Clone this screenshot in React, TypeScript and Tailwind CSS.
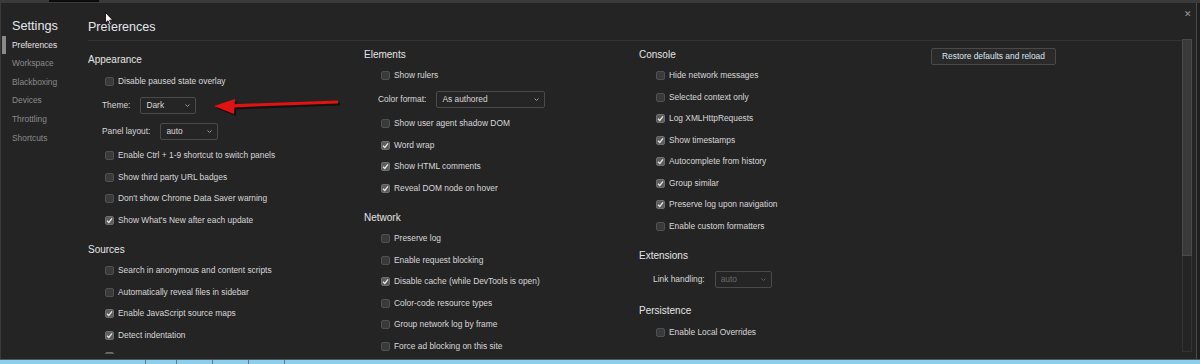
import React from "react"

type Item =
  | { kind: "head"; text: string; first?: boolean }
  | { kind: "check"; text: string; on?: boolean }
  | { kind: "select"; label: string; value: string; w: string; disabled?: boolean }

const col1: Item[] = [
  { kind: "head", text: "Appearance", first: true },
  { kind: "check", text: "Disable paused state overlay" },
  { kind: "select", label: "Theme:", value: "Dark", w: "w-[56px]" },
  { kind: "select", label: "Panel layout:", value: "auto", w: "w-[58px]" },
  { kind: "check", text: "Enable Ctrl + 1-9 shortcut to switch panels" },
  { kind: "check", text: "Show third party URL badges" },
  { kind: "check", text: "Don't show Chrome Data Saver warning" },
  { kind: "check", text: "Show What's New after each update", on: true },
  { kind: "head", text: "Sources" },
  { kind: "check", text: "Search in anonymous and content scripts" },
  { kind: "check", text: "Automatically reveal files in sidebar" },
  { kind: "check", text: "Enable JavaScript source maps", on: true },
  { kind: "check", text: "Detect indentation", on: true },
  // scrolled past the bottom edge, only the box top peeks out
  { kind: "check", text: "", on: true },
]

const col2: Item[] = [
  { kind: "head", text: "Elements", first: true },
  { kind: "check", text: "Show rulers" },
  { kind: "select", label: "Color format:", value: "As authored", w: "w-[109px]" },
  { kind: "check", text: "Show user agent shadow DOM" },
  { kind: "check", text: "Word wrap", on: true },
  { kind: "check", text: "Show HTML comments", on: true },
  { kind: "check", text: "Reveal DOM node on hover", on: true },
  { kind: "head", text: "Network" },
  { kind: "check", text: "Preserve log" },
  { kind: "check", text: "Enable request blocking" },
  { kind: "check", text: "Disable cache (while DevTools is open)", on: true },
  { kind: "check", text: "Color-code resource types" },
  { kind: "check", text: "Group network log by frame" },
  { kind: "check", text: "Force ad blocking on this site" },
]

const col3: Item[] = [
  { kind: "head", text: "Console", first: true },
  { kind: "check", text: "Hide network messages" },
  { kind: "check", text: "Selected context only" },
  { kind: "check", text: "Log XMLHttpRequests", on: true },
  { kind: "check", text: "Show timestamps", on: true },
  { kind: "check", text: "Autocomplete from history", on: true },
  { kind: "check", text: "Group similar", on: true },
  { kind: "check", text: "Preserve log upon navigation", on: true },
  { kind: "check", text: "Enable custom formatters" },
  { kind: "head", text: "Extensions" },
  { kind: "select", label: "Link handling:", value: "auto", w: "w-[57px]", disabled: true },
  { kind: "head", text: "Persistence" },
  { kind: "check", text: "Enable Local Overrides" },
]

const navItems = ["Preferences", "Workspace", "Blackboxing", "Devices", "Throttling", "Shortcuts"]

function Checkbox({ on }: { on?: boolean }) {
  return (
    <span
      className={`flex h-[9px] w-[9px] shrink-0 items-center justify-center rounded-[2px] border ${
        on ? "border-[#6e6e6e] bg-[#5c5c5c]" : "border-[#505050] bg-[#3a3a3a]"
      }`}
    >
      {on && (
        <svg width="7" height="7" viewBox="0 0 7 7">
          <path d="M1 3.8 L2.8 5.5 L6 1.3" fill="none" stroke="#e6e6e6" strokeWidth="1.3" />
        </svg>
      )}
    </span>
  )
}

function Row({ item }: { item: Item }) {
  if (item.kind === "head") {
    return (
      <div className={`flex h-[21.5px] shrink-0 items-center text-[10px] text-[#e4e4e4] ${item.first ? "" : "mt-[7.5px]"}`}>
        {item.text}
      </div>
    )
  }
  if (item.kind === "check") {
    return (
      <div className="flex h-[21.5px] shrink-0 items-center gap-[4px] pl-[17px] text-[8.4px] text-[#d8d8d8]">
        <Checkbox on={item.on} />
        {item.text && <span className="whitespace-nowrap">{item.text}</span>}
      </div>
    )
  }
  return (
    <div className="flex h-[26.5px] shrink-0 items-center gap-[10px] pl-[14px] text-[8.4px] text-[#d8d8d8]">
      <span className="whitespace-nowrap">{item.label}</span>
      <div
        className={`flex h-[17px] ${item.w} items-center justify-between rounded-[2px] border border-[#4a4a4a] bg-[#252525] pl-[5px] pr-[5px] ${
          item.disabled ? "text-[#6a6a6a]" : "text-[#d8d8d8]"
        }`}
      >
        <span>{item.value}</span>
        <svg width="5" height="3" viewBox="0 0 5 3">
          <path d="M0.5 0.5 L2.5 2.5 L4.5 0.5" fill="none" stroke={item.disabled ? "#5a5a5a" : "#9a9a9a"} strokeWidth="1" />
        </svg>
      </div>
    </div>
  )
}

function Column({ items, className }: { items: Item[]; className: string }) {
  return (
    <div className={`flex shrink-0 flex-col ${className}`}>
      {items.map((it, i) => (
        <Row key={i} item={it} />
      ))}
    </div>
  )
}

export default function App() {
  return (
    <div className="relative flex h-[364px] w-[1200px] flex-col overflow-hidden bg-[#242424] font-['Liberation_Sans',Arial,sans-serif]">
      {/* window top edge */}
      <div className="flex h-[3px] shrink-0 bg-[#3a3a3a]">
        <div className="ml-[49px] h-[2px] w-[50px] bg-[#0c0c0c]" />
      </div>

      <div className="flex min-h-0 flex-1">
        {/* sidebar */}
        <div className="flex w-[88px] shrink-0 flex-col border-l border-[#3a3a3a]">
          <div className="pl-[11px] pt-[15px] text-[12.7px] leading-[16px] text-[#e4e8ec]">Settings</div>
          <div className="mt-[1.7px] flex flex-col">
            {navItems.map((n, i) => (
              <div key={n} className="relative flex h-[18.6px] items-center pl-[11px] text-[8.4px]">
                {i === 0 && <div className="absolute left-[1px] top-0 h-full w-[4px] bg-[#8a8a8a]" />}
                <span className={i === 0 ? "text-[#e4e4e4]" : "text-[#8a8a8a]"}>{n}</span>
              </div>
            ))}
          </div>
        </div>

        {/* main */}
        <div className="flex min-w-0 flex-1 flex-col">
          <div className="flex h-[38px] shrink-0 items-end border-b border-[#333333] pb-[5px]">
            <span className="text-[12.5px] leading-[16px] text-[#e4e8ec]">Preferences</span>
          </div>
          <div className="flex h-[313px] shrink-0 items-start overflow-hidden">
            <Column items={col1} className="w-[276px] pt-[8px]" />
            <Column items={col2} className="w-[275px] pt-[2.5px]" />
            <Column items={col3} className="w-[292px] pt-[2.5px]" />
            <div className="pt-[7px]">
              <div className="flex h-[17px] w-[125px] items-center justify-center rounded-[2px] border border-[#4a4a4a] bg-[#2a2a2a] text-[8.4px] text-[#dde6ee]">
                Restore defaults and reload
              </div>
            </div>
          </div>
        </div>

        {/* scrollbar */}
        <div className="flex w-[10px] shrink-0 flex-col pt-[36px]">
          <div className="h-[217px] border border-[#4a4a4a] bg-[#3a3a3a]" />
          <div className="h-[96px] border border-t-0 border-[#333333]" />
        </div>

        {/* right frame */}
        <div className="w-[4px] shrink-0" />
        <div className="w-[1px] shrink-0 bg-[#4a4a4a]" />
        <div className="w-[3px] shrink-0 bg-[#1e1e1e]" />
      </div>

      {/* taskbar edge */}
      <div className="flex h-[5px] shrink-0 flex-col">
        <div className="h-[1px] bg-[#555555]" />
        <div className="flex flex-1 bg-[#8ccfec]">
          <div className="ml-[145px] w-[1px] bg-[#5a7d8e]" />
          <div className="ml-[30px] w-[1px] bg-[#5a7d8e]" />
          <div className="ml-[35px] w-[1px] bg-[#5a7d8e]" />
          <div className="ml-[35px] w-[1px] bg-[#5a7d8e]" />
          <div className="ml-[35px] w-[1px] bg-[#5a7d8e]" />
        </div>
      </div>

      {/* close */}
      <div className="absolute left-[1184px] top-[10px] text-[9px] leading-none text-[#9a9a9a]">✕</div>

      {/* mouse cursor */}
      <svg className="absolute left-[105px] top-[12px]" width="9" height="14" viewBox="0 0 9 14">
        <path d="M0.5 0.5 L0.5 11 L3 8.7 L4.8 12.8 L6.3 12.1 L4.6 8.2 L7.8 8.2 Z" fill="#ffffff" stroke="#000000" strokeWidth="0.8" />
      </svg>

      {/* red annotation arrow */}
      <svg className="absolute left-[205px] top-[90px]" width="145" height="32" viewBox="0 0 145 32">
        <g transform="translate(2 2)" opacity="0.5">
          <path d="M28 14.2 L133 10.4 L133 13.4 L28 17.4 Z" fill="#000000" />
          <path d="M9 16 L30 9 L29 24 Z" fill="#000000" />
        </g>
        <path d="M28 14.2 L133 10.4 L133 13.4 L28 17.4 Z" fill="#e01212" />
        <path d="M9 16 L30 9 L29 24 Z" fill="#e01212" />
      </svg>
    </div>
  )
}
